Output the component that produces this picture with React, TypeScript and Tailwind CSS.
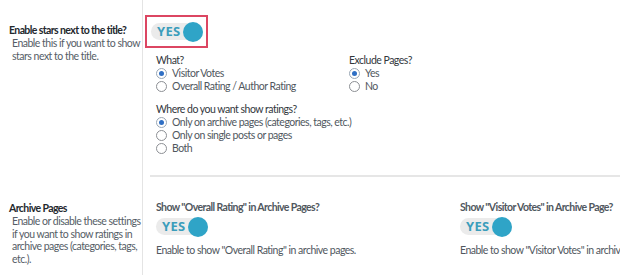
import React from "react";

const font = { fontFamily: 'Lato, "Open Sans", sans-serif' };

function Toggle() {
  return (
    <div className="relative inline-flex h-[17px] w-[52px] items-center rounded-full bg-[#ebebeb]">
      <span
        className="pl-[6px] text-[13px] font-bold leading-none tracking-[0.3px] text-[#3a9dbb]"
        style={{ fontFamily: '"Open Sans", sans-serif' }}
      >
        YES
      </span>
      <span className="absolute right-0 top-1/2 h-[20px] w-[20px] -translate-y-1/2 rounded-full bg-[#2fa4c7]" />
    </div>
  );
}

function Radio({ label, checked }: { label: string; checked?: boolean }) {
  return (
    <div className="flex h-[13px] items-center gap-[5px]">
      <span
        className={
          "flex h-[11px] w-[11px] items-center justify-center rounded-full border bg-white " +
          (checked ? "border-[#9aa7b5]" : "border-[#8c8f94]")
        }
      >
        {checked && <span className="h-[5px] w-[5px] rounded-full bg-[#2f6fc4]" />}
      </span>
      <span className="text-[10.5px] tracking-[-0.5px] text-[#50575e]">{label}</span>
    </div>
  );
}

export default function App() {
  return (
    <div className="h-[275px] w-[620px] overflow-hidden bg-white" style={font}>
      <div className="flex h-full">
        <div className="w-[143px] shrink-0 border-r border-[#e4e4e4]">
          <div className="pl-[9px] pt-[23px]">
            <div className="text-[10.5px] font-bold leading-[14px] tracking-[-0.6px] text-[#23282d]">
              Enable stars next to the title?
            </div>
            <div className="pl-[3px] pr-[2px] text-[10.5px] leading-[12.5px] tracking-[-0.5px] text-[#555d66]">
              Enable this if you want to show stars next to the title.
            </div>
          </div>
          <div className="pl-[9px] pt-[139px]">
            <div className="text-[10.5px] font-bold leading-[14px] tracking-[-0.6px] text-[#23282d]">
              Archive Pages
            </div>
            <div className="pl-[3px] text-[10.5px] leading-[12.5px] tracking-[-0.5px] text-[#555d66]">
              Enable or disable these settings if you want to show ratings in archive pages (categories, tags, etc.).
            </div>
          </div>
        </div>
        <div className="flex-1">
          <div className="pl-[2px] pt-[15px]">
            <div className="inline-flex border-2 border-[#dc4662] pb-[6px] pl-[4px] pr-[3px] pt-[6px]">
              <Toggle />
            </div>
          </div>
          <div className="flex pl-[13px] pt-[6px]">
            <div className="w-[193px]">
              <div className="text-[10.5px] leading-[13px] tracking-[-0.5px] text-[#32373c]">What?</div>
              <Radio label="Visitor Votes" checked />
              <Radio label="Overall Rating / Author Rating" />
            </div>
            <div>
              <div className="text-[10.5px] leading-[13px] tracking-[-0.5px] text-[#32373c]">Exclude Pages?</div>
              <Radio label="Yes" checked />
              <Radio label="No" />
            </div>
          </div>
          <div className="pl-[13px] pt-[10px]">
            <div className="text-[10.5px] leading-[13px] tracking-[-0.5px] text-[#32373c]">
              Where do you want show ratings?
            </div>
            <Radio label="Only on archive pages (categories, tags, etc.)" checked />
            <Radio label="Only on single posts or pages" />
            <Radio label="Both" />
          </div>
          <div className="ml-[7px] mt-[20px] h-[2px] bg-[#e6e6e6]" />
          <div className="flex pl-[13px] pt-[24px]">
            <div className="w-[304px]">
              <div className="text-[10.5px] font-bold leading-[12px] tracking-[-0.6px] text-[#50575e]">
                Show "Overall Rating" in Archive Pages?
              </div>
              <div>
                <Toggle />
              </div>
              <div className="pt-[7px] text-[10.5px] leading-[13px] tracking-[-0.5px] text-[#50575e]">
                Enable to show "Overall Rating" in archive pages.
              </div>
            </div>
            <div className="whitespace-nowrap">
              <div className="text-[10.5px] font-bold leading-[12px] tracking-[-0.6px] text-[#50575e]">
                Show "Visitor Votes" in Archive Page?
              </div>
              <div>
                <Toggle />
              </div>
              <div className="pt-[7px] text-[10.5px] leading-[13px] tracking-[-0.5px] text-[#50575e]">
                Enable to show "Visitor Votes" in archive pages.
              </div>
            </div>
          </div>
        </div>
      </div>
    </div>
  );
}
